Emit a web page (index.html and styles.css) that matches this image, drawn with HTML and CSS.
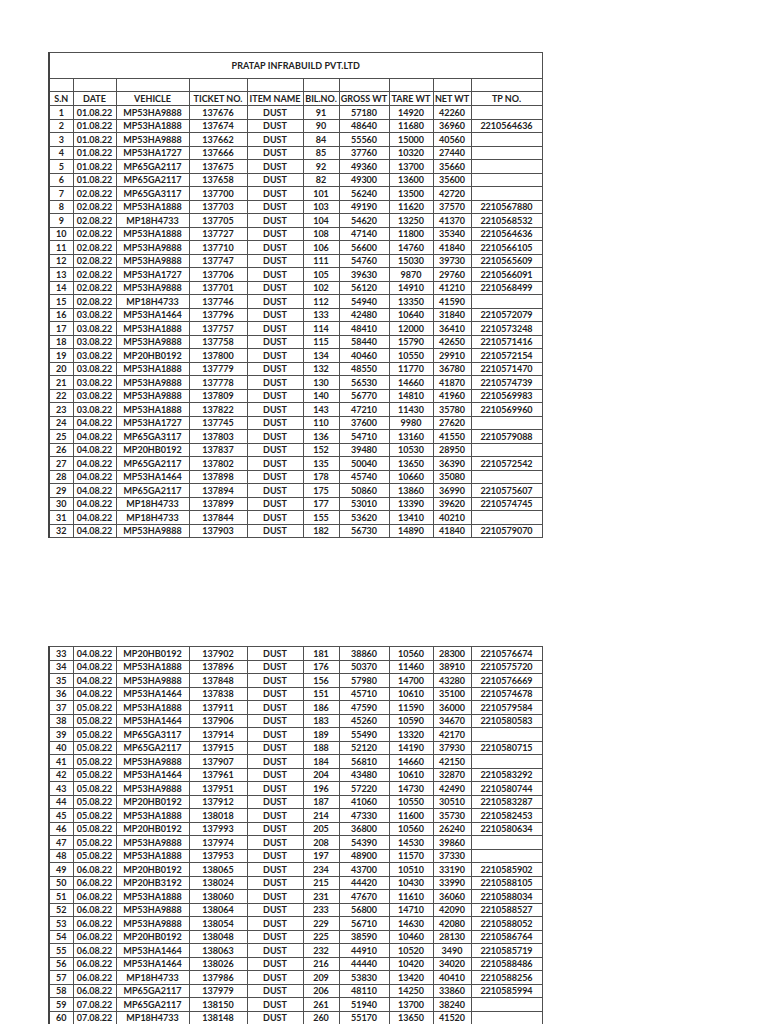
FILE: index.html
```html
<!DOCTYPE html>
<html lang="en">
<head>
<meta charset="utf-8">
<title>PRATAP INFRABUILD PVT.LTD</title>
<link rel="stylesheet" href="styles.css">
</head>
<body>
<div class="page">
<table class="sheet first">
<colgroup>
<col class="c-sn"><col class="c-date"><col class="c-veh"><col class="c-tkt"><col class="c-item"><col class="c-bil"><col class="c-gross"><col class="c-tare"><col class="c-net"><col class="c-tp">
</colgroup>
<tr class="title-row"><td colspan="10">PRATAP INFRABUILD PVT.LTD</td></tr>
<tr class="blank-row"><td></td><td></td><td></td><td></td><td></td><td></td><td></td><td></td><td></td><td></td></tr>
<tr class="head-row"><td>S.N</td><td>DATE</td><td>VEHICLE</td><td>TICKET NO.</td><td>ITEM NAME</td><td>BIL.NO.</td><td>GROSS WT</td><td>TARE WT</td><td>NET WT</td><td>TP NO.</td></tr>
<tr><td>1</td><td>01.08.22</td><td>MP53HA9888</td><td>137676</td><td>DUST</td><td>91</td><td>57180</td><td>14920</td><td>42260</td><td></td></tr>
<tr><td>2</td><td>01.08.22</td><td>MP53HA1888</td><td>137674</td><td>DUST</td><td>90</td><td>48640</td><td>11680</td><td>36960</td><td>2210564636</td></tr>
<tr><td>3</td><td>01.08.22</td><td>MP53HA9888</td><td>137662</td><td>DUST</td><td>84</td><td>55560</td><td>15000</td><td>40560</td><td></td></tr>
<tr><td>4</td><td>01.08.22</td><td>MP53HA1727</td><td>137666</td><td>DUST</td><td>85</td><td>37760</td><td>10320</td><td>27440</td><td></td></tr>
<tr><td>5</td><td>01.08.22</td><td>MP65GA2117</td><td>137675</td><td>DUST</td><td>92</td><td>49360</td><td>13700</td><td>35660</td><td></td></tr>
<tr><td>6</td><td>01.08.22</td><td>MP65GA2117</td><td>137658</td><td>DUST</td><td>82</td><td>49300</td><td>13600</td><td>35600</td><td></td></tr>
<tr><td>7</td><td>02.08.22</td><td>MP65GA3117</td><td>137700</td><td>DUST</td><td>101</td><td>56240</td><td>13500</td><td>42720</td><td></td></tr>
<tr><td>8</td><td>02.08.22</td><td>MP53HA1888</td><td>137703</td><td>DUST</td><td>103</td><td>49190</td><td>11620</td><td>37570</td><td>2210567880</td></tr>
<tr><td>9</td><td>02.08.22</td><td>MP18H4733</td><td>137705</td><td>DUST</td><td>104</td><td>54620</td><td>13250</td><td>41370</td><td>2210568532</td></tr>
<tr><td>10</td><td>02.08.22</td><td>MP53HA1888</td><td>137727</td><td>DUST</td><td>108</td><td>47140</td><td>11800</td><td>35340</td><td>2210564636</td></tr>
<tr><td>11</td><td>02.08.22</td><td>MP53HA9888</td><td>137710</td><td>DUST</td><td>106</td><td>56600</td><td>14760</td><td>41840</td><td>2210566105</td></tr>
<tr><td>12</td><td>02.08.22</td><td>MP53HA9888</td><td>137747</td><td>DUST</td><td>111</td><td>54760</td><td>15030</td><td>39730</td><td>2210565609</td></tr>
<tr><td>13</td><td>02.08.22</td><td>MP53HA1727</td><td>137706</td><td>DUST</td><td>105</td><td>39630</td><td>9870</td><td>29760</td><td>2210566091</td></tr>
<tr><td>14</td><td>02.08.22</td><td>MP53HA9888</td><td>137701</td><td>DUST</td><td>102</td><td>56120</td><td>14910</td><td>41210</td><td>2210568499</td></tr>
<tr><td>15</td><td>02.08.22</td><td>MP18H4733</td><td>137746</td><td>DUST</td><td>112</td><td>54940</td><td>13350</td><td>41590</td><td></td></tr>
<tr><td>16</td><td>03.08.22</td><td>MP53HA1464</td><td>137796</td><td>DUST</td><td>133</td><td>42480</td><td>10640</td><td>31840</td><td>2210572079</td></tr>
<tr><td>17</td><td>03.08.22</td><td>MP53HA1888</td><td>137757</td><td>DUST</td><td>114</td><td>48410</td><td>12000</td><td>36410</td><td>2210573248</td></tr>
<tr><td>18</td><td>03.08.22</td><td>MP53HA9888</td><td>137758</td><td>DUST</td><td>115</td><td>58440</td><td>15790</td><td>42650</td><td>2210571416</td></tr>
<tr><td>19</td><td>03.08.22</td><td>MP20HB0192</td><td>137800</td><td>DUST</td><td>134</td><td>40460</td><td>10550</td><td>29910</td><td>2210572154</td></tr>
<tr><td>20</td><td>03.08.22</td><td>MP53HA1888</td><td>137779</td><td>DUST</td><td>132</td><td>48550</td><td>11770</td><td>36780</td><td>2210571470</td></tr>
<tr><td>21</td><td>03.08.22</td><td>MP53HA9888</td><td>137778</td><td>DUST</td><td>130</td><td>56530</td><td>14660</td><td>41870</td><td>2210574739</td></tr>
<tr><td>22</td><td>03.08.22</td><td>MP53HA9888</td><td>137809</td><td>DUST</td><td>140</td><td>56770</td><td>14810</td><td>41960</td><td>2210569983</td></tr>
<tr><td>23</td><td>03.08.22</td><td>MP53HA1888</td><td>137822</td><td>DUST</td><td>143</td><td>47210</td><td>11430</td><td>35780</td><td>2210569960</td></tr>
<tr><td>24</td><td>04.08.22</td><td>MP53HA1727</td><td>137745</td><td>DUST</td><td>110</td><td>37600</td><td>9980</td><td>27620</td><td></td></tr>
<tr><td>25</td><td>04.08.22</td><td>MP65GA3117</td><td>137803</td><td>DUST</td><td>136</td><td>54710</td><td>13160</td><td>41550</td><td>2210579088</td></tr>
<tr><td>26</td><td>04.08.22</td><td>MP20HB0192</td><td>137837</td><td>DUST</td><td>152</td><td>39480</td><td>10530</td><td>28950</td><td></td></tr>
<tr><td>27</td><td>04.08.22</td><td>MP65GA2117</td><td>137802</td><td>DUST</td><td>135</td><td>50040</td><td>13650</td><td>36390</td><td>2210572542</td></tr>
<tr><td>28</td><td>04.08.22</td><td>MP53HA1464</td><td>137898</td><td>DUST</td><td>178</td><td>45740</td><td>10660</td><td>35080</td><td></td></tr>
<tr><td>29</td><td>04.08.22</td><td>MP65GA2117</td><td>137894</td><td>DUST</td><td>175</td><td>50860</td><td>13860</td><td>36990</td><td>2210575607</td></tr>
<tr><td>30</td><td>04.08.22</td><td>MP18H4733</td><td>137899</td><td>DUST</td><td>177</td><td>53010</td><td>13390</td><td>39620</td><td>2210574745</td></tr>
<tr><td>31</td><td>04.08.22</td><td>MP18H4733</td><td>137844</td><td>DUST</td><td>155</td><td>53620</td><td>13410</td><td>40210</td><td></td></tr>
<tr><td>32</td><td>04.08.22</td><td>MP53HA9888</td><td>137903</td><td>DUST</td><td>182</td><td>56730</td><td>14890</td><td>41840</td><td>2210579070</td></tr>
</table>

<table class="sheet second">
<colgroup>
<col class="c-sn"><col class="c-date"><col class="c-veh"><col class="c-tkt"><col class="c-item"><col class="c-bil"><col class="c-gross"><col class="c-tare"><col class="c-net"><col class="c-tp">
</colgroup>
<tr><td>33</td><td>04.08.22</td><td>MP20HB0192</td><td>137902</td><td>DUST</td><td>181</td><td>38860</td><td>10560</td><td>28300</td><td>2210576674</td></tr>
<tr><td>34</td><td>04.08.22</td><td>MP53HA1888</td><td>137896</td><td>DUST</td><td>176</td><td>50370</td><td>11460</td><td>38910</td><td>2210575720</td></tr>
<tr><td>35</td><td>04.08.22</td><td>MP53HA9888</td><td>137848</td><td>DUST</td><td>156</td><td>57980</td><td>14700</td><td>43280</td><td>2210576669</td></tr>
<tr><td>36</td><td>04.08.22</td><td>MP53HA1464</td><td>137838</td><td>DUST</td><td>151</td><td>45710</td><td>10610</td><td>35100</td><td>2210574678</td></tr>
<tr><td>37</td><td>05.08.22</td><td>MP53HA1888</td><td>137911</td><td>DUST</td><td>186</td><td>47590</td><td>11590</td><td>36000</td><td>2210579584</td></tr>
<tr><td>38</td><td>05.08.22</td><td>MP53HA1464</td><td>137906</td><td>DUST</td><td>183</td><td>45260</td><td>10590</td><td>34670</td><td>2210580583</td></tr>
<tr><td>39</td><td>05.08.22</td><td>MP65GA3117</td><td>137914</td><td>DUST</td><td>189</td><td>55490</td><td>13320</td><td>42170</td><td></td></tr>
<tr><td>40</td><td>05.08.22</td><td>MP65GA2117</td><td>137915</td><td>DUST</td><td>188</td><td>52120</td><td>14190</td><td>37930</td><td>2210580715</td></tr>
<tr><td>41</td><td>05.08.22</td><td>MP53HA9888</td><td>137907</td><td>DUST</td><td>184</td><td>56810</td><td>14660</td><td>42150</td><td></td></tr>
<tr><td>42</td><td>05.08.22</td><td>MP53HA1464</td><td>137961</td><td>DUST</td><td>204</td><td>43480</td><td>10610</td><td>32870</td><td>2210583292</td></tr>
<tr><td>43</td><td>05.08.22</td><td>MP53HA9888</td><td>137951</td><td>DUST</td><td>196</td><td>57220</td><td>14730</td><td>42490</td><td>2210580744</td></tr>
<tr><td>44</td><td>05.08.22</td><td>MP20HB0192</td><td>137912</td><td>DUST</td><td>187</td><td>41060</td><td>10550</td><td>30510</td><td>2210583287</td></tr>
<tr><td>45</td><td>05.08.22</td><td>MP53HA1888</td><td>138018</td><td>DUST</td><td>214</td><td>47330</td><td>11600</td><td>35730</td><td>2210582453</td></tr>
<tr><td>46</td><td>05.08.22</td><td>MP20HB0192</td><td>137993</td><td>DUST</td><td>205</td><td>36800</td><td>10560</td><td>26240</td><td>2210580634</td></tr>
<tr><td>47</td><td>05.08.22</td><td>MP53HA9888</td><td>137974</td><td>DUST</td><td>208</td><td>54390</td><td>14530</td><td>39860</td><td></td></tr>
<tr><td>48</td><td>05.08.22</td><td>MP53HA1888</td><td>137953</td><td>DUST</td><td>197</td><td>48900</td><td>11570</td><td>37330</td><td></td></tr>
<tr><td>49</td><td>06.08.22</td><td>MP20HB0192</td><td>138065</td><td>DUST</td><td>234</td><td>43700</td><td>10510</td><td>33190</td><td>2210585902</td></tr>
<tr><td>50</td><td>06.08.22</td><td>MP20HB3192</td><td>138024</td><td>DUST</td><td>215</td><td>44420</td><td>10430</td><td>33990</td><td>2210588105</td></tr>
<tr><td>51</td><td>06.08.22</td><td>MP53HA1888</td><td>138060</td><td>DUST</td><td>231</td><td>47670</td><td>11610</td><td>36060</td><td>2210588034</td></tr>
<tr><td>52</td><td>06.08.22</td><td>MP53HA9888</td><td>138064</td><td>DUST</td><td>233</td><td>56800</td><td>14710</td><td>42090</td><td>2210588527</td></tr>
<tr><td>53</td><td>06.08.22</td><td>MP53HA9888</td><td>138054</td><td>DUST</td><td>229</td><td>56710</td><td>14630</td><td>42080</td><td>2210588052</td></tr>
<tr><td>54</td><td>06.08.22</td><td>MP20HB0192</td><td>138048</td><td>DUST</td><td>225</td><td>38590</td><td>10460</td><td>28130</td><td>2210586764</td></tr>
<tr><td>55</td><td>06.08.22</td><td>MP53HA1464</td><td>138063</td><td>DUST</td><td>232</td><td>44910</td><td>10520</td><td>3490</td><td>2210585719</td></tr>
<tr><td>56</td><td>06.08.22</td><td>MP53HA1464</td><td>138026</td><td>DUST</td><td>216</td><td>44440</td><td>10420</td><td>34020</td><td>2210588486</td></tr>
<tr><td>57</td><td>06.08.22</td><td>MP18H4733</td><td>137986</td><td>DUST</td><td>209</td><td>53830</td><td>13420</td><td>40410</td><td>2210588256</td></tr>
<tr><td>58</td><td>06.08.22</td><td>MP65GA2117</td><td>137979</td><td>DUST</td><td>206</td><td>48110</td><td>14250</td><td>33860</td><td>2210585994</td></tr>
<tr><td>59</td><td>07.08.22</td><td>MP65GA2117</td><td>138150</td><td>DUST</td><td>261</td><td>51940</td><td>13700</td><td>38240</td><td></td></tr>
<tr><td>60</td><td>07.08.22</td><td>MP18H4733</td><td>138148</td><td>DUST</td><td>260</td><td>55170</td><td>13650</td><td>41520</td><td></td></tr>
</table>
</div>
</body>
</html>
```

FILE: styles.css
```css
html, body {
  margin: 0;
  padding: 0;
  background: #ffffff;
}

body {
  font-family: "Lato", "Liberation Sans", sans-serif;
  color: #222222;
  height: 1024px;
  overflow: hidden;
}

.page {
  padding: 52px 0 0 48px;
}

.sheet {
  border-collapse: collapse;
  table-layout: fixed;
  width: 494px;
  font-size: 9px;
  font-weight: 700;
}

.sheet td {
  border: 1px solid #505050;
  padding: 0;
  height: 13.5px;
  box-sizing: border-box;
  text-align: center;
  vertical-align: middle;
  line-height: 11px;
  white-space: nowrap;
  overflow: hidden;
}

.sheet tr > td:first-child {
  border-left: 2px solid #444444;
}

.c-sn { width: 24px; }
.c-date { width: 43px; }
.c-veh { width: 73px; }
.c-tkt { width: 58px; }
.c-item { width: 56px; }
.c-bil { width: 36px; }
.c-gross { width: 50px; }
.c-tare { width: 44px; }
.c-net { width: 38px; }
.c-tp { width: 71px; }

.sheet .title-row td {
  height: 26px;
  letter-spacing: 0.1px;
}

.sheet .blank-row td {
  height: 13px;
}

.sheet .head-row td {
  height: 14px;
}

.second {
  margin-top: 108px;
}
```
